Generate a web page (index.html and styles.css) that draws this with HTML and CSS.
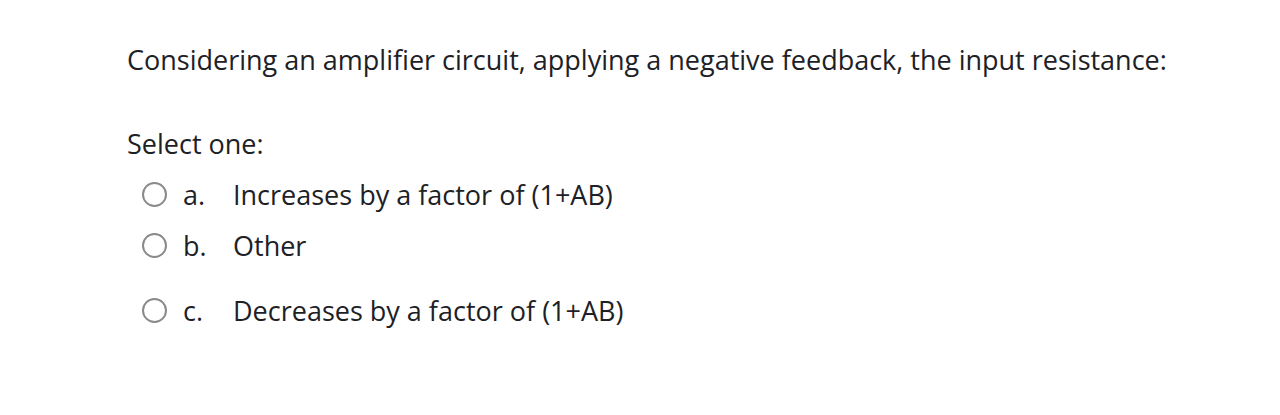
FILE: index.html
```html
<!DOCTYPE html>
<html lang="en">
<head>
    <meta charset="UTF-8">
    <title>Question</title>
    <link rel="stylesheet" href="styles.css">
</head>
<body>

<div class="que">
    <p class="qtext">Considering an amplifier circuit, applying a negative feedback, the input resistance:</p>

    <div class="ablock">
        <p class="prompt">Select one:</p>
        <div class="answer">
            <label class="opt opt-a">
                <span class="radio"></span>
                <span class="letter">a.</span>
                <span class="text">Increases by a factor of (1+AB)</span>
            </label>
            <label class="opt opt-b">
                <span class="radio"></span>
                <span class="letter">b.</span>
                <span class="text">Other</span>
            </label>
            <label class="opt opt-c">
                <span class="radio"></span>
                <span class="letter">c.</span>
                <span class="text">Decreases by a factor of (1+AB)</span>
            </label>
        </div>
    </div>
</div>

</body>
</html>
```

FILE: styles.css
```css
body {
    margin: 0;
    background: #fff;
    color: #1d2125;
    font-family: "Open Sans", "Noto Sans", sans-serif;
    font-size: 27px;
}

.que {
    padding: 40px 0 0 127px;
}

.qtext {
    margin: 0;
    line-height: 40px;
}

.ablock {
    margin-top: 44px;
}

.prompt {
    margin: 0;
    line-height: 40px;
}

.answer {
    margin-top: 5px;
}

.opt {
    display: flex;
    align-items: center;
    height: 51px;
    padding-left: 15px;
}

.opt-c {
    margin-top: 14px;
}

.radio {
    width: 21px;
    height: 21px;
    border: 2px solid #8a8a8a;
    border-radius: 50%;
    flex-shrink: 0;
}

.letter {
    width: 50px;
    margin-left: 16px;
}
```
